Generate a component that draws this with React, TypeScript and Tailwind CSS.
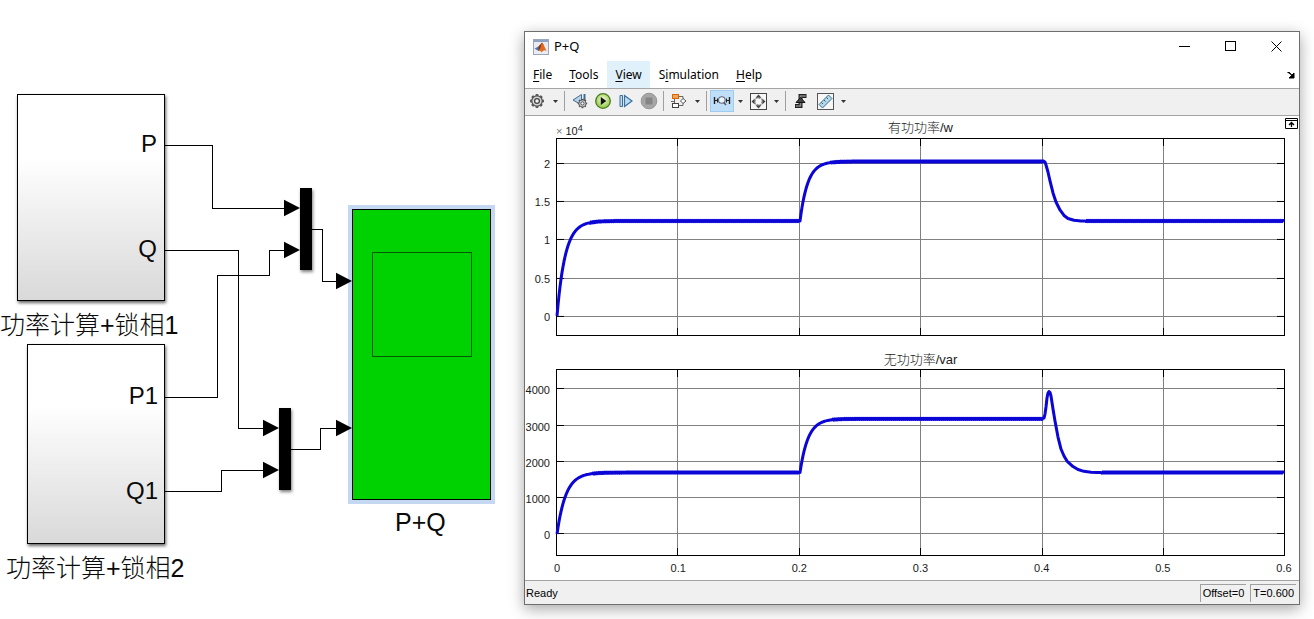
import React from "react";

type Point = [number, number];

/* ---------- Curve data, in plot units ---------- */

const settle = (x0: number, x1: number, from: number, to: number, tau: number): Point[] => {
  const points: Point[] = [];
  for (let x = x0; x <= x1; x += 1) {
    const t = x - x0;
    const ripple = t > tau * 4 ? (Math.round(x) % 2 ? 0.6 : -0.6) : 0;
    points.push([x, to + (from - to) * Math.exp(-t / tau) + ripple]);
  }
  return points;
};

const activePower: Point[] = [
  ...settle(0, 242, 177, 82, 8.2),
  ...settle(243, 486, 82, 22.5, 7.7),
  [488, 23], [489, 26], [491, 33], [493, 42], [496, 54], [499, 63], [503, 71], [507, 76.5], [511, 79.5], [517, 81.3],
  ...settle(524, 727, 82, 82, 1),
];

const reactivePower: Point[] = [
  ...settle(0, 242, 164, 102.5, 8.8),
  ...settle(243, 486, 102.5, 48.8, 8),
  [487, 48], [488, 44], [489, 37], [490, 28], [491, 23], [492, 21.5], [493, 22.5], [494, 26], [496, 39], [498, 51],
  [501, 67], [504, 79], [507, 86], [510, 91], [516, 96.5], [521, 99.5], [527, 101.3], [534, 102.2],
  ...settle(540, 727, 102.5, 102.5, 1),
];

const toPoints = (points: Point[]) => points.map(([x, y]) => `${x},${y.toFixed(2)}`).join(" ");

interface Tick {
  label: string;
  at: number;
}

interface PlotProps {
  name: string;
  height: number;
  ticks: Tick[];
  curve: Point[];
  xLabels?: boolean;
  className: string;
}

const xTicks = ["0", "0.1", "0.2", "0.3", "0.4", "0.5", "0.6"];

function Plot({ name, height, ticks, curve, xLabels, className }: PlotProps) {
  return (
    <div className={`min-h-0 border border-black ${className}`}>
      <svg role="img" aria-label={name} className="block h-full w-full overflow-visible font-['Liberation_Sans',sans-serif] text-[11px]">
        <svg width="100%" height="100%" viewBox={`0 0 727 ${height}`} preserveAspectRatio="none" className="overflow-visible">
          <g stroke="#808080" strokeWidth="1" shapeRendering="crispEdges">
            {[121, 243, 364, 486, 607].map((x) => (
              <path key={x} d={`M${x - 0.5} 0V${height}`} vectorEffect="non-scaling-stroke" />
            ))}
            {ticks.map((t) => (
              <path key={t.at} d={`M0 ${t.at}H727`} vectorEffect="non-scaling-stroke" />
            ))}
          </g>
          <g stroke="#000" strokeWidth="1" shapeRendering="crispEdges">
            {[121, 243, 364, 486, 607].map((x) => (
              <path key={x} d={`M${x - 0.5} 0v7M${x - 0.5} ${height}v-7`} />
            ))}
            {ticks.map((t) => (
              <path key={t.at} d={`M0 ${t.at}h7M727 ${t.at}h-7`} />
            ))}
          </g>
          <polyline points={toPoints(curve)} fill="none" stroke="#0b05d6" strokeWidth="3" strokeLinejoin="round" vectorEffect="non-scaling-stroke" />
        </svg>
        <g fill="#1a1a1a">
          {ticks.map((t) => (
            <text key={t.label} x="-7" y={`${(t.at / height) * 100}%`} dy="5" textAnchor="end">
              {t.label}
            </text>
          ))}
          {xLabels &&
            xTicks.map((label, i) => (
              <text key={label} x={`${(i / 6) * 100}%`} y="100%" dy="17" textAnchor="middle">
                {label}
              </text>
            ))}
        </g>
      </svg>
    </div>
  );
}

/* ---------- Toolbar drawings ---------- */

function MatlabIcon() {
  return (
    <svg width="16" height="16" viewBox="0 0 16 16">
      <rect x=".5" y=".5" width="15" height="15" fill="#e9edf3" stroke="#9aa7bb" />
      <rect x="1" y="1" width="14" height="2" fill="#8ea3c4" />
      <path d="M1.500 9.500 5.500 7.500 8 9.500 5.500 12z" fill="#4a78b5" />
      <path d="M5.500 7.500 9 3.500 10.500 6 8 10 5.500 12z" fill="#8c2c12" />
      <path d="M9 3.500C11 5 12 9.500 14 12.500 12 10.500 10.500 11 8.500 13.500 8 12 7 11.500 5.500 12 7.500 10 8 5.500 9 3.500z" fill="#df6a1f" />
    </svg>
  );
}

function GearShape() {
  return (
    <>
      {[0, 45, 90, 135].map((angle) => (
        <rect key={angle} x="6.500" y="1" width="3" height="14" rx="1" fill="#555" transform={`rotate(${angle} 8 8)`} />
      ))}
      <circle cx="8" cy="8" r="5.200" fill="#d4d4d4" stroke="#555" strokeWidth="1.200" />
      <circle cx="8" cy="8" r="2.400" fill="#f5f5f5" stroke="#444" strokeWidth="1.300" />
    </>
  );
}

function GearIcon() {
  return (
    <svg width="16" height="16" viewBox="0 0 16 16">
      <GearShape />
    </svg>
  );
}

function StepBackIcon() {
  return (
    <svg width="16" height="16" viewBox="0 0 16 16">
      <path d="M9.500 1.500 1 7l8.500 5z" fill="#b5d3ea" stroke="#456b8c" />
      <path d="M12.500 1v8" stroke="#456b8c" strokeWidth="2" />
      <g transform="translate(5 5) scale(.68)">
        <GearShape />
      </g>
    </svg>
  );
}

function RunIcon() {
  return (
    <svg width="18" height="18" viewBox="0 0 18 18">
      <defs>
        <radialGradient id="run" cx=".5" cy=".4" r=".6">
          <stop offset="0" stopColor="#f3fbd8" />
          <stop offset="1" stopColor="#8cc63f" />
        </radialGradient>
      </defs>
      <circle cx="9" cy="9" r="7.300" fill="url(#run)" stroke="#4c7a1f" strokeWidth="1.300" />
      <path d="M6.800 5v8l5.500-4z" fill="#111" />
    </svg>
  );
}

function StepForwardIcon() {
  return (
    <svg width="16" height="16" viewBox="0 0 16 16">
      <path d="M2 2.500h2.500v11H2z" fill="#b9dcf5" stroke="#3f6f9c" />
      <path d="M6.500 2.500 14 8l-7.500 5.500z" fill="#b9dcf5" stroke="#3f6f9c" strokeWidth="1.200" />
    </svg>
  );
}

function StopIcon() {
  return (
    <svg width="18" height="18" viewBox="0 0 18 18">
      <circle cx="9" cy="9" r="7.800" fill="#a6a6a6" stroke="#969696" />
      <rect x="5.500" y="5.500" width="7" height="7" fill="#858585" />
    </svg>
  );
}

function BlocksIcon() {
  return (
    <svg width="18" height="16" viewBox="0 0 18 16">
      <path d="M8.500 3.500h4.500v3M8.500 12.500h4.500v-3M1 8.500h3M4.500 6v5" fill="none" stroke="#666" />
      <rect x="2.500" y="1.500" width="6" height="4" fill="#f9a24a" stroke="#d06a10" />
      <rect x="2.500" y="10.500" width="6" height="4" fill="#fff" stroke="#444" />
      <path d="m13 5.500 3 2.500-3 2.500L10.500 8z" fill="#fff" stroke="#555" />
    </svg>
  );
}

function TriggerIcon() {
  return (
    <svg width="18" height="16" viewBox="0 0 18 16">
      <path d="M1.500 4v7M16.500 4v7" stroke="#222" strokeWidth="1.400" />
      <path d="M2 7.500h2M14 7.500h2M4.500 5.500v4M13.500 5.500v4" stroke="#222" />
      <circle cx="8.800" cy="7" r="3.300" fill="#eaf4fd" stroke="#667" strokeWidth="1.100" />
      <path d="m10.800 9.500 2.200 2.500" stroke="#556" strokeWidth="1.600" />
    </svg>
  );
}

function FitIcon() {
  return (
    <svg width="17" height="17" viewBox="0 0 17 17">
      <rect x=".5" y=".5" width="16" height="16" fill="#f7f7f7" stroke="#444" />
      <rect x="5.500" y="5.500" width="6" height="6" fill="none" stroke="#999" strokeDasharray="2 1" />
      <path d="m8.500 1.500 3 3.200h-6zM8.500 15.500l3-3.200h-6zM1.500 8.500l3.200-3v6zM15.500 8.500l-3.200-3v6z" fill="#444" />
    </svg>
  );
}

function EdgeIcon() {
  return (
    <svg width="16" height="16" viewBox="0 0 16 16">
      <path d="M2 13h5.500V3h6" fill="none" stroke="#222" strokeWidth="4" />
      <path d="M2.800 13h4.700V3h5.200" fill="none" stroke="#888" strokeWidth="1.600" />
      <path d="m7.500 4.500 4.500 5H3z" fill="#444" stroke="#111" />
    </svg>
  );
}

function RulerIcon() {
  return (
    <svg width="17" height="17" viewBox="0 0 17 17">
      <rect x=".5" y=".5" width="16" height="16" fill="#f7f7f7" stroke="#555" />
      <path d="M2 11.500 11.500 2 15 5.500 5.500 15z" fill="#b5d9ec" stroke="#3d6d87" />
      <path d="m4.500 9.500 1.500 1.500M7 7l1.500 1.500M9.500 4.500 11 6" stroke="#2f5a72" />
    </svg>
  );
}

interface ToolProps {
  label: string;
  children: React.ReactNode;
  className?: string;
}

function Tool({ label, children, className = "w-6" }: ToolProps) {
  return (
    <button type="button" aria-label={label} className={`flex h-[22px] shrink-0 items-center justify-center ${className}`}>
      {children}
    </button>
  );
}

function Caret({ label }: { label: string }) {
  return (
    <Tool label={label} className="w-3">
      <svg width="5" height="3" viewBox="0 0 5 3">
        <path d="M0 0h5L2.500 3z" fill="#333" />
      </svg>
    </Tool>
  );
}

function Divider() {
  return <div className="mx-[3px] h-5 w-px shrink-0 bg-[#a0a0a0]" />;
}

/* ---------- Scope window ---------- */

const menus: { key: string; before: string; after: string; open?: boolean }[] = [
  { before: "", key: "F", after: "ile" },
  { before: "", key: "T", after: "ools" },
  { before: "", key: "V", after: "iew", open: true },
  { before: "S", key: "i", after: "mulation" },
  { before: "", key: "H", after: "elp" },
];

function TitleBar() {
  return (
    <header className="flex h-[29px] shrink-0 items-center pl-2">
      <MatlabIcon />
      <h1 className="ml-[5px] flex-1 text-[13px]">P+Q</h1>
      <button type="button" aria-label="Minimize" className="flex h-full w-[46px] items-center justify-center">
        <svg width="11" height="11" viewBox="0 0 11 11">
          <path d="M0 5.500h11" stroke="#000" />
        </svg>
      </button>
      <button type="button" aria-label="Maximize" className="flex h-full w-[46px] items-center justify-center">
        <svg width="11" height="11" viewBox="0 0 11 11">
          <rect x=".5" y=".5" width="10" height="9" fill="none" stroke="#000" />
        </svg>
      </button>
      <button type="button" aria-label="Close" className="flex h-full w-[46px] items-center justify-center">
        <svg width="11" height="11" viewBox="0 0 11 11">
          <path d="m.5.5 10 10m0-10-10 10" stroke="#000" />
        </svg>
      </button>
    </header>
  );
}

function MenuBar() {
  return (
    <nav className="flex h-[27px] shrink-0 items-center gap-px">
      {menus.map((m) => (
        <button key={m.after} type="button" className={`h-full px-2 text-[12px] ${m.open ? "bg-[#e1f1fc]" : ""}`}>
          {m.before}
          <span className="underline underline-offset-2">{m.key}</span>
          {m.after}
        </button>
      ))}
      <button type="button" aria-label="Dock" className="mr-1 ml-auto">
        <svg width="8" height="8" viewBox="0 0 8 8">
          <path d="M.5 1.500h2L6 5.500M7 2v5H2z" fill="#000" stroke="#000" />
        </svg>
      </button>
    </nav>
  );
}

function ToolBar() {
  return (
    <div className="flex h-7 shrink-0 items-center border-y border-[#a5a5a5] bg-[#f0f0f0] pb-0.5">
      <Tool label="Configuration"><GearIcon /></Tool>
      <Caret label="Configuration options" />
      <Divider />
      <Tool label="Step back" className="w-[23px]"><StepBackIcon /></Tool>
      <Tool label="Run" className="w-[23px]"><RunIcon /></Tool>
      <Tool label="Step forward" className="w-[23px]"><StepForwardIcon /></Tool>
      <Tool label="Stop" className="w-[23px]"><StopIcon /></Tool>
      <Divider />
      <Tool label="Highlight block"><BlocksIcon /></Tool>
      <Caret label="Highlight options" />
      <Divider />
      <Tool label="Zoom X" className="w-6 border border-[#9fcbee] bg-[#bfdff8]"><TriggerIcon /></Tool>
      <Caret label="Zoom options" />
      <Tool label="Scale axes"><FitIcon /></Tool>
      <Caret label="Scale options" />
      <Divider />
      <Tool label="Triggers"><EdgeIcon /></Tool>
      <Tool label="Measurements"><RulerIcon /></Tool>
      <Caret label="Measurement options" />
    </div>
  );
}

function ScopeWindow() {
  return (
    <section className="flex min-w-0 flex-1 flex-col border border-[#6e6e6e] bg-white font-['Noto_Sans','Noto_Sans_CJK_SC',sans-serif] text-black shadow-[0_4px_14px_rgba(0,0,0,0.35)]">
      <TitleBar />
      <MenuBar />
      <ToolBar />
      <div className="relative flex min-h-[464px] flex-1 flex-col pr-[14px] pl-[31px] font-['Liberation_Sans','Noto_Sans_CJK_SC',sans-serif] text-[#1a1a1a]">
        <button type="button" aria-label="Show title bar" className="absolute top-[2px] right-[1px]">
          <svg width="13" height="11" viewBox="0 0 13 11">
            <path d="M.5.5h12v10H.5zM.5 2.500h12" fill="none" stroke="#000" />
            <path d="M6.500 9V4.500M4 7l2.500-2.500L9 7" fill="none" stroke="#000" strokeWidth="1.300" />
          </svg>
        </button>
        <div className="grid h-[22px] shrink-0 grid-cols-3">
          <p className="pt-[7px] text-[11px] leading-4">
            <span className="text-[#777]">×</span> 10<sup className="text-[9px]">4</sup>
          </p>
          <h2 className="pt-1 text-center text-[13px] leading-4 font-light">有功功率/w</h2>
        </div>
        <Plot
          name="有功功率/w"
          height={196}
          className="flex-[198_1_0%]"
          curve={activePower}
          ticks={[
            { label: "2", at: 24.5 },
            { label: "1.5", at: 62.5 },
            { label: "1", at: 100.5 },
            { label: "0.5", at: 139.5 },
            { label: "0", at: 177.5 },
          ]}
        />
        <h2 className="h-[33px] shrink-0 pt-4 text-center text-[13px] leading-4 font-light">无功功率/var</h2>
        <Plot
          name="无功功率/var"
          height={185}
          className="mb-6 flex-[187_1_0%]"
          curve={reactivePower}
          xLabels
          ticks={[
            { label: "4000", at: 18.5 },
            { label: "3000", at: 55.5 },
            { label: "2000", at: 91.5 },
            { label: "1000", at: 127.5 },
            { label: "0", at: 163.5 },
          ]}
        />
      </div>
      <footer className="flex h-6 shrink-0 items-center gap-1 border-t border-[#a5a5a5] bg-[#f0f0f0] pt-px pr-[3px] pl-px font-['Liberation_Sans',sans-serif] text-[11px]">
        <span className="flex-1">Ready</span>
        <span className="border-t border-l border-[#a0a0a0] px-0.5 leading-[17px]">Offset=0</span>
        <span className="border-t border-l border-[#a0a0a0] px-0.5 leading-[17px]">T=0.600</span>
      </footer>
    </section>
  );
}

/* ---------- Block diagram canvas ---------- */

const wires = [
  "M165 145.500H212.500V208.500H285",
  "M165 250.500H238.500V428.500H264",
  "M165 397.500H217.500V275.500H269.500V250.500H285",
  "M165 491.500H221.500V470.500H264",
  "M312 229.500H322.500V281.500H337",
  "M291 449.500H320.500V428.500H337",
];

const arrows: Point[] = [
  [284, 208], [284, 250], [263, 428], [263, 470], [336, 281], [336, 428],
];

function Diagram() {
  return (
    <section className="relative w-[524px] shrink-0 font-['Liberation_Sans','Noto_Sans_CJK_SC',sans-serif] text-[24px] leading-7 text-[#0a0a0a]">
      <div className="absolute top-[94px] left-[17px] h-[207px] w-[148px] border border-black bg-linear-to-b from-white from-30% to-[#d9d9d9] shadow-[1px_2px_3px_rgba(0,0,0,0.6)]">
        <span className="absolute top-[35px] right-[7px]">P</span>
        <span className="absolute top-[140px] right-[7px]">Q</span>
      </div>
      <div className="absolute top-[344px] left-[27px] h-[200px] w-[138px] border border-black bg-linear-to-b from-white from-30% to-[#d9d9d9] shadow-[1px_2px_3px_rgba(0,0,0,0.6)]">
        <span className="absolute top-[37px] right-1.5">P1</span>
        <span className="absolute top-[132px] right-1.5">Q1</span>
      </div>
      <p className="absolute top-[311px] left-0 text-[25px] font-light whitespace-nowrap">功率计算+锁相1</p>
      <p className="absolute top-[554px] left-[6px] text-[25px] font-light whitespace-nowrap">功率计算+锁相2</p>

      <div className="absolute top-[188px] left-[300px] h-[82px] w-3 bg-black shadow-[1px_2px_3px_rgba(0,0,0,0.5)]" />
      <div className="absolute top-[408px] left-[279px] h-[82px] w-3 bg-black shadow-[1px_2px_3px_rgba(0,0,0,0.5)]" />

      <div className="absolute top-[209px] left-[352px] h-[291px] w-[139px] border border-black bg-[#00d100] shadow-[0_0_0_4px_#c5d8f2]">
        <div className="absolute top-[42px] left-[19px] h-[105px] w-[100px] border border-[#005a00]" />
      </div>
      <p className="absolute top-[508px] left-[395px] text-[25px]">P+Q</p>

      <svg width="524" height="619" viewBox="0 0 524 619" className="absolute top-0 left-0" aria-hidden="true">
        <g fill="none" stroke="#000" strokeWidth="1" shapeRendering="crispEdges">
          {wires.map((d) => (
            <path key={d} d={d} />
          ))}
        </g>
        {arrows.map(([x, y]) => (
          <path key={`${x}-${y}`} d={`M${x} ${y - 8.2}v16.400l16-8.200z`} fill="#000" />
        ))}
      </svg>
    </section>
  );
}

export default function App() {
  return (
    <main className="flex min-h-screen bg-white">
      <Diagram />
      <div className="flex min-w-0 flex-1 pt-[31px] pr-[14px] pb-[14px]">
        <ScopeWindow />
      </div>
    </main>
  );
}
